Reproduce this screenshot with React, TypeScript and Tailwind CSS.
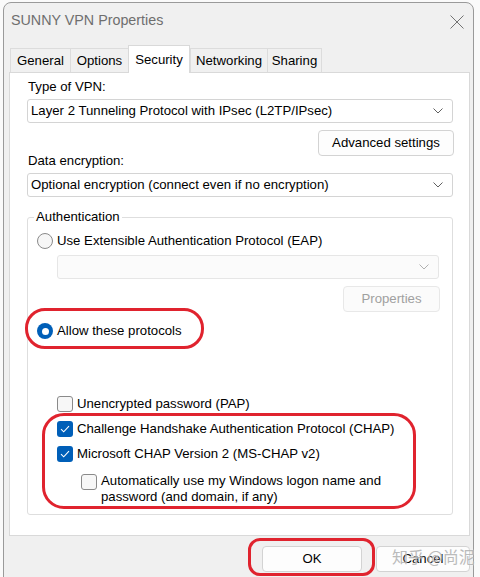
import type { ReactNode } from 'react';

const font = { fontFamily: '"Liberation Sans", Arial, "Noto Sans CJK SC", sans-serif' };

const Chevron = ({ color = '#606060' }: { color?: string }) => (
  <svg width="10" height="6" viewBox="0 0 10 6" fill="none">
    <path d="M0.5 0.5 L5 5 L9.5 0.5" stroke={color} strokeWidth="1" />
  </svg>
);

const Combo = ({ text, disabled = false, width }: { text?: string; disabled?: boolean; width: string }) => (
  <div
    className={`flex h-[24px] items-center justify-between rounded-[3px] border pl-[3px] pr-[9px] ${width} ${
      disabled ? 'border-[#e6e6e6] bg-[#fbfbfb]' : 'border-[#d4d4d4] bg-white'
    }`}
  >
    <span className="leading-[16px]">{text}</span>
    <Chevron color={disabled ? '#b0b0b0' : '#606060'} />
  </div>
);

const Button = ({ children, width, disabled = false }: { children: ReactNode; width: string; disabled?: boolean }) => (
  <div
    className={`flex h-[26px] items-center justify-center rounded-[4px] border ${width} ${
      disabled ? 'border-[#e8e8e8] bg-[#fbfbfb] text-[#a0a0a0]' : 'border-[#d3d3d3] bg-[#fdfdfd] text-black'
    }`}
  >
    {children}
  </div>
);

const Radio = ({ checked, label }: { checked?: boolean; label: string }) => (
  <div className="flex h-[18px] items-center gap-[4px] pl-[9px]">
    {checked ? (
      <span className="flex h-[16px] w-[16px] items-center justify-center rounded-full bg-[#005fb8]">
        <span className="h-[7px] w-[7px] rounded-full bg-white" />
      </span>
    ) : (
      <span className="h-[16px] w-[16px] rounded-full border border-[#8a8a8a] bg-[#f6f6f6]" />
    )}
    <span className="leading-[18px]">{label}</span>
  </div>
);

const Check = ({ checked }: { checked?: boolean }) =>
  checked ? (
    <span className="flex h-[16px] w-[16px] shrink-0 items-center justify-center rounded-[3px] bg-[#005fb8]">
      <svg width="10" height="8" viewBox="0 0 10 8" fill="none">
        <path d="M1 4.2 L3.7 6.8 L9 1.2" stroke="white" strokeWidth="1.1" />
      </svg>
    </span>
  ) : (
    <span className="block h-[16px] w-[16px] shrink-0 rounded-[3px] border border-[#8a8a8a] bg-[#f7f7f7]" />
  );

const CheckRow = ({ checked, label }: { checked?: boolean; label: string }) => (
  <div className="flex h-[18px] items-center gap-[4px] pl-[29px]">
    <Check checked={checked} />
    <span className="leading-[18px]">{label}</span>
  </div>
);

const tabs = [
  { name: 'General', w: 'w-[60px]' },
  { name: 'Options', w: 'w-[58px]' },
  { name: 'Security', w: 'w-[62px]', active: true },
  { name: 'Networking', w: 'w-[77px]' },
  { name: 'Sharing', w: 'w-[55px]' },
];

export default function App() {
  return (
    <div className="relative h-[577px] w-[480px] overflow-hidden bg-[#fafafa] pl-[3px] pr-[6px] pt-[2px] text-[13.2px] text-black" style={font}>
      <div className="h-[620px] rounded-t-[8px] border border-[#9a9a9a] bg-[#f0f0f0]">
        {/* title bar */}
        <div className="flex h-[36px] items-center justify-between pl-[7px] pr-[8px]">
          <span className="text-[14.3px] text-[#6e6e6e]">SUNNY VPN Properties</span>
          <svg width="14" height="14" viewBox="0 0 14 14" fill="none" className="mr-[1px] mt-[1px]">
            <path d="M0.5 0.5 L13.5 13.5 M13.5 0.5 L0.5 13.5" stroke="#737373" strokeWidth="1" />
          </svg>
        </div>

        {/* tabs */}
        <div className="ml-[6px] mt-[6px] flex h-[27px] items-end">
          {tabs.map((t) =>
            t.active ? (
              <div
                key={t.name}
                className={`relative z-10 -mb-px flex h-[28px] items-start justify-center border border-b-0 border-[#d9d9d9] bg-white pt-[4px] ${t.w}`}
              >
                {t.name}
              </div>
            ) : (
              <div
                key={t.name}
                className={`flex h-[24px] items-center justify-center border border-r-0 border-b-0 border-[#dcdcdc] bg-[#f0f0f0] last:border-r ${t.w}`}
              >
                {t.name}
              </div>
            )
          )}
        </div>

        {/* panel */}
        <div className="ml-[5px] flex h-[464px] w-[461px] flex-col border border-[#d9d9d9] bg-white pl-[17px] pt-[5px]">
          <div className="ml-[1px] leading-[18px]">Type of VPN:</div>
          <div className="mt-[3px]">
            <Combo width="w-[426px]" text="Layer 2 Tunneling Protocol with IPsec (L2TP/IPsec)" />
          </div>
          <div className="mt-[7px] flex w-[427px] justify-end">
            <Button width="w-[136px]">Advanced settings</Button>
          </div>
          <div className="ml-[1px] mt-[-3px] leading-[16px]">Data encryption:</div>
          <div className="mt-[4px]">
            <Combo width="w-[426px]" text="Optional encryption (connect even if no encryption)" />
          </div>

          <fieldset className="mt-[12px] w-[426px] rounded-[3px] border border-[#dedede] pb-[9px]">
            <legend className="ml-[6px] px-[2px] leading-[16px]">Authentication</legend>
            <div className="mt-[7px]">
              <Radio label="Use Extensible Authentication Protocol (EAP)" />
            </div>
            <div className="ml-[29px] mt-[5px]">
              <Combo width="w-[382px]" disabled />
            </div>
            <div className="mt-[7px] flex w-[412px] justify-end">
              <Button width="w-[97px]" disabled>
                Properties
              </Button>
            </div>
            <div className="mt-[10px]">
              <Radio checked label="Allow these protocols" />
            </div>
            <div className="mt-[55px]">
              <CheckRow label="Unencrypted password (PAP)" />
            </div>
            <div className="mt-[7px]">
              <CheckRow checked label="Challenge Handshake Authentication Protocol (CHAP)" />
            </div>
            <div className="mt-[7px]">
              <CheckRow checked label="Microsoft CHAP Version 2 (MS-CHAP v2)" />
            </div>
            <div className="mt-[10px] flex items-start gap-[4px] pl-[53px]">
              <div className="mt-[1px]">
                <Check />
              </div>
              <span className="leading-[16px]">
                Automatically use my Windows logon name and
                <br />
                password (and domain, if any)
              </span>
            </div>
          </fieldset>
        </div>

        {/* footer buttons */}
        <div className="ml-[5px] mt-[10px] flex w-[461px] justify-end gap-[14px]">
          <Button width="w-[100px]">OK</Button>
          <Button width="w-[94px]">Cancel</Button>
        </div>
      </div>

      {/* watermark */}
      <div
        className="absolute left-[392px] top-[545px] text-[16px] leading-[22px] text-[#b4b4b4] opacity-90"
        style={{ fontFamily: '"Noto Sans CJK SC", sans-serif', textShadow: '0 0 2px #fff' }}
      >
        知乎 @尚泥
      </div>

      {/* red annotations */}
      <div className="pointer-events-none absolute left-[25px] top-[308px] h-[41px] w-[179px] rounded-[20px] border-[3px] border-[#e0232e]" />
      <div className="pointer-events-none absolute left-[42px] top-[413px] h-[96px] w-[374px] rounded-[22px] border-[3px] border-[#e0232e]" />
      <div className="pointer-events-none absolute left-[248px] top-[538px] h-[38px] w-[127px] rounded-[12px] border-[3px] border-[#e0232e]" />
    </div>
  );
}
